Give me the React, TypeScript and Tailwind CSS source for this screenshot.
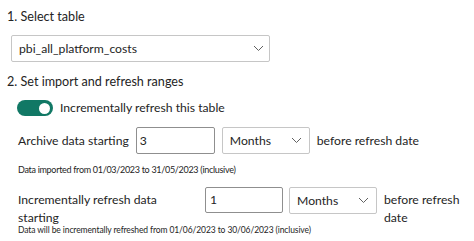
function Chevron() {
  return (
    <svg width="11" height="7" viewBox="0 0 11 7" fill="none" className="shrink-0">
      <path d="M1 1l4.5 4.5L10 1" stroke="#616161" strokeWidth="1" />
    </svg>
  )
}

function UnitSelect() {
  return (
    <div className="flex h-[27px] w-[88px] shrink-0 items-center justify-between rounded-[2px] border border-[#c6c6c6] pl-[7px] pr-[7px]">
      <span>Months</span>
      <Chevron />
    </div>
  )
}

export default function App() {
  return (
    <div
      className="flex h-[241px] w-[474px] flex-col overflow-hidden bg-white text-[12.2px] leading-[18px] text-[#242424]"
      style={{ fontFamily: 'Lato, "Open Sans", sans-serif' }}
    >
      {/* Select table */}
      <div className="mt-[7px] pl-[7px] text-[12.6px] leading-[20px]">1. Select table</div>
      <div className="ml-[11px] mt-[8px] flex h-[27px] w-[259px] items-center justify-between rounded-[2px] border border-[#c6c6c6] pl-[7px] pr-[5px]">
        <span>pbi_all_platform_costs</span>
        <Chevron />
      </div>

      {/* Ranges */}
      <div className="mt-[10px] pl-[7px] text-[12.6px] leading-[20px]">2. Set import and refresh ranges</div>

      <div className="ml-[17px] mt-[6px] flex h-[20px] items-center gap-[7px]">
        <div className="flex h-[16px] w-[36px] items-center justify-end rounded-full bg-[#117865] pr-[3px]">
          <div className="h-[11px] w-[11px] rounded-full bg-white" />
        </div>
        <span>Incrementally refresh this table</span>
      </div>

      <div className="ml-[18px] mt-[9px] flex items-center">
        <span>Archive data starting</span>
        <div className="ml-[7px] flex h-[27px] w-[79px] shrink-0 items-center rounded-[2px] border border-[#8f8f8f] pl-[3px]">3</div>
        <div className="ml-[7px]">
          <UnitSelect />
        </div>
        <span className="ml-[7px]">before refresh date</span>
      </div>
      <div className="ml-[18px] mt-[9px] text-[9px] leading-[14px] tracking-[-0.3px]">
        Data imported from 01/03/2023 to 31/05/2023 (inclusive)
      </div>

      <div className="ml-[18px] mt-[10px] flex items-start">
        <div className="mt-[4px] w-[187px] shrink-0">
          <div className="w-[150px]">Incrementally refresh data starting</div>
        </div>
        <div className="flex h-[26px] w-[78px] shrink-0 items-center rounded-[2px] border border-[#8f8f8f] pl-[4px]">1</div>
        <div className="ml-[6px]">
          <UnitSelect />
        </div>
        <span className="ml-[7px] mt-[4px] w-[82px]">before refresh date</span>
      </div>
      <div className="ml-[18px] mt-[-3px] text-[8.5px] leading-[12px] tracking-[-0.1px]">
        Data will be incrementally refreshed from 01/06/2023 to 30/06/2023 (inclusive)
      </div>
    </div>
  )
}
